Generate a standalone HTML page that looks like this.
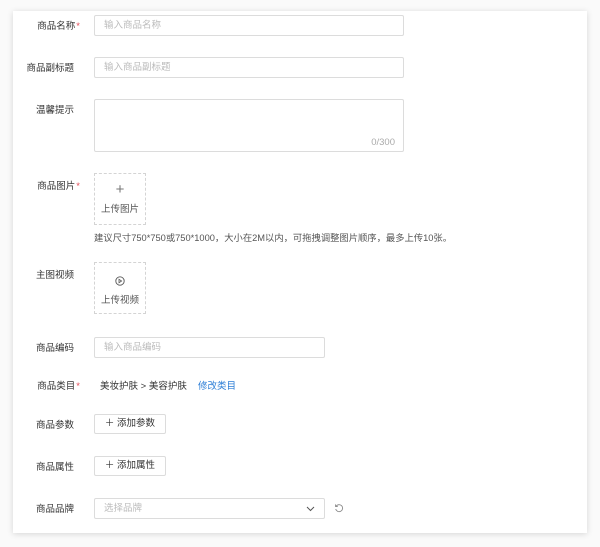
<!DOCTYPE html>
<html><head><meta charset="utf-8"><style>
*{box-sizing:border-box;margin:0;padding:0}
body{width:600px;height:547px;background:#fafafa;font-family:"Liberation Sans","Noto Sans CJK SC",sans-serif;position:relative;overflow:hidden;color:#333}
.card{position:absolute;left:13px;top:11px;width:574px;height:522px;background:#fff;box-shadow:0 1px 6px rgba(0,0,0,.15)}
.lbl{position:absolute;right:520px;font-size:9.5px;color:#333;white-space:nowrap}
.lbl i{color:#e34d59;font-style:normal;margin-left:1px}
.inp{position:absolute;left:94px;border:1px solid #dcdcdc;border-radius:2px;font-size:9.5px;color:#bbb;padding-left:9px;background:#fff}
.box{position:absolute;left:94px;width:52px;height:52px;border:1px dashed #d4d4d4;text-align:center;font-size:9.5px;color:#555}
.btn{position:absolute;left:94px;width:72px;height:20px;border:1px solid #dcdcdc;border-radius:2px;font-size:9.5px;line-height:18px;text-align:center;color:#333}
</style></head><body>
<div class="card"></div>
<div class="lbl" style="top:18px;right:520px">商品名称<i>*</i></div>
<div class="inp" style="top:15px;width:310px;height:21px;line-height:19px">输入商品名称</div>
<div class="lbl" style="top:60px;right:526px">商品副标题</div>
<div class="inp" style="top:57px;width:310px;height:21px;line-height:19px">输入商品副标题</div>
<div class="lbl" style="top:102px;right:526px">温馨提示</div>
<div class="inp" style="top:99px;width:310px;height:53px"><span style="position:absolute;right:8px;bottom:3px;color:#aaa">0/300</span></div>
<div class="lbl" style="top:178px">商品图片<i>*</i></div>
<div class="box" style="top:173px"><div style="font-size:15px;color:#777;font-weight:300;margin-top:8px;line-height:16px">+</div><div style="margin-top:3px">上传图片</div></div>
<div style="position:absolute;left:94px;top:230px;font-size:9.3px;color:#555;white-space:nowrap">建议尺寸750*750或750*1000，大小在2M以内，可拖拽调整图片顺序，最多上传10张。</div>
<div class="lbl" style="top:267px;right:526px">主图视频</div>
<div class="box" style="top:262px"><svg width="10" height="10" viewBox="0 0 10 10" style="margin-top:13px"><circle cx="5" cy="5" r="4.2" fill="none" stroke="#555" stroke-width="0.9"/><path d="M4 3.3L6.6 5 4 6.7Z" fill="none" stroke="#555" stroke-width="0.8"/></svg><div style="margin-top:3px">上传视频</div></div>
<div class="lbl" style="top:340px;right:526px">商品编码</div>
<div class="inp" style="top:337px;width:231px;height:21px;line-height:19px">输入商品编码</div>
<div class="lbl" style="top:378px">商品类目<i>*</i></div>
<div style="position:absolute;left:100px;top:378px;font-size:9.5px;color:#333">美妆护肤 &gt; 美容护肤</div>
<div style="position:absolute;left:198px;top:378px;font-size:9.5px;color:#2b7dd6">修改类目</div>
<div class="lbl" style="top:417px;right:526px">商品参数</div>
<div class="btn" style="top:414px">＋ 添加参数</div>
<div class="lbl" style="top:459px;right:526px">商品属性</div>
<div class="btn" style="top:456px">＋ 添加属性</div>
<div class="lbl" style="top:501px;right:526px">商品品牌</div>
<div class="inp" style="top:498px;width:231px;height:21px;line-height:19px">选择品牌<svg width="9" height="6" viewBox="0 0 9 6" style="position:absolute;right:9px;top:7px"><path d="M1 1L4.5 4.5 8 1" fill="none" stroke="#555" stroke-width="1"/></svg></div>
<svg width="10" height="10" viewBox="0 0 10 10" style="position:absolute;left:334px;top:503px"><path d="M2.2 3.2A3.5 3.5 0 1 1 1.7 6" fill="none" stroke="#888" stroke-width="0.9"/><path d="M1.6 1.4V3.6H3.8" fill="none" stroke="#888" stroke-width="0.9"/></svg>
</body></html>
